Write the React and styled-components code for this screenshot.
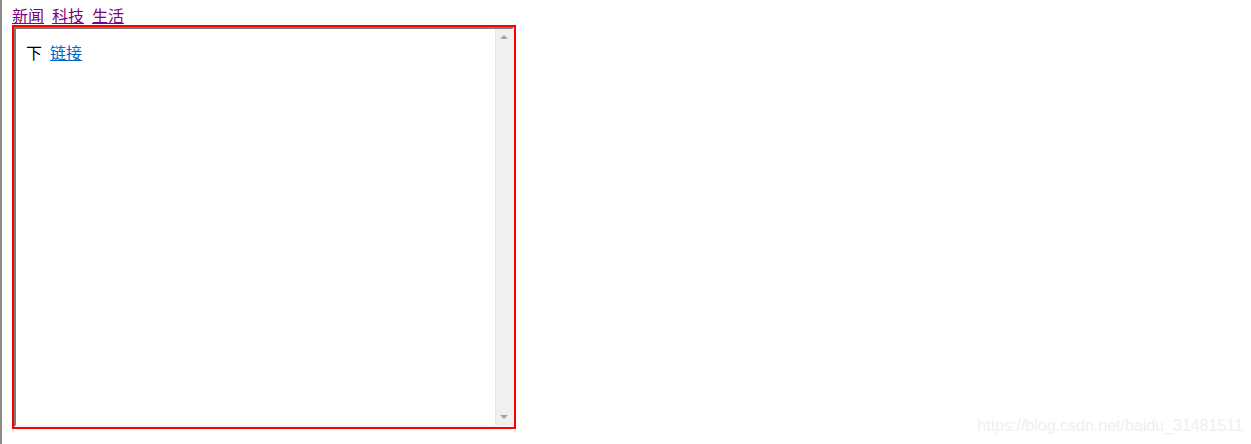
import React from 'react';
import styled, {createGlobalStyle} from 'styled-components';

const GlobalStyle = createGlobalStyle`
  html, body {
    margin: 0;
    padding: 0;
    background: #fff;
  }
  body {
    font-family: "Noto Sans CJK SC", "Liberation Sans", sans-serif;
    font-size: 16px;
  }
`;

const links = ['新闻', '科技', '生活'];

const App = () => {
  return (
    <>
      <GlobalStyle/>
      <Page>
        <Nav>
          {links.map(name => (
            <NavLink key={name} href="#">{name}</NavLink>
          ))}
        </Nav>
        <FrameBox>
          <Frame>
            <FrameBody>
              <span>下</span>
              <InnerLink href="#">链接</InnerLink>
            </FrameBody>
            <Scrollbar>
              <Arrow $dir="up"/>
              <Arrow $dir="down"/>
            </Scrollbar>
          </Frame>
        </FrameBox>
        <Watermark>https://blog.csdn.net/baidu_31481511</Watermark>
      </Page>
    </>
  );
};

export default App;

const Page = styled.div`
  position: relative;
  height: 444px;
  box-sizing: border-box;
  border-left: 2px solid #8c8c8c;
  padding: 8px 10px 0;
`;

const Nav = styled.div`
  display: flex;
  align-items: flex-start;
  gap: 8px;
  height: 17px;
  line-height: 14px;
`;

const NavLink = styled.a`
  color: #800080;
  text-decoration: underline;
  text-underline-offset: 1px;
`;

const FrameBox = styled.div`
  width: 504px;
  height: 404px;
  box-sizing: border-box;
  border: 2px solid #ff0000;
`;

const Frame = styled.div`
  display: flex;
  height: 100%;
  box-sizing: border-box;
  border-style: solid;
  border-width: 2px 2px 2px 2px;
  border-color: #7a7a7a #f4f4f4 #f4f4f4 #7a7a7a;
`;

const FrameBody = styled.div`
  flex: 1;
  display: flex;
  align-items: flex-start;
  gap: 8px;
  padding: 13px 10px;
  line-height: 20px;
  color: #000;
`;

const InnerLink = styled.a`
  color: #0066cc;
  text-decoration: underline;
  text-underline-offset: 1px;
`;

const Scrollbar = styled.div`
  width: 17px;
  display: flex;
  flex-direction: column;
  justify-content: space-between;
  align-items: center;
  background: #f0f0f0;
  border-left: 1px solid #e6e6e6;
  padding: 6px 0;
  box-sizing: border-box;
`;

const Arrow = styled.div`
  width: 0;
  height: 0;
  border-left: 4px solid transparent;
  border-right: 4px solid transparent;
  ${p => p.$dir === 'up'
    ? 'border-bottom: 4px solid #a3a3a3;'
    : 'border-top: 4px solid #a3a3a3;'}
`;

const Watermark = styled.div`
  position: absolute;
  right: 8px;
  bottom: 9px;
  font-family: "Liberation Sans", Arial, sans-serif;
  font-size: 16px;
  line-height: 18px;
  color: #efefef;
`;
